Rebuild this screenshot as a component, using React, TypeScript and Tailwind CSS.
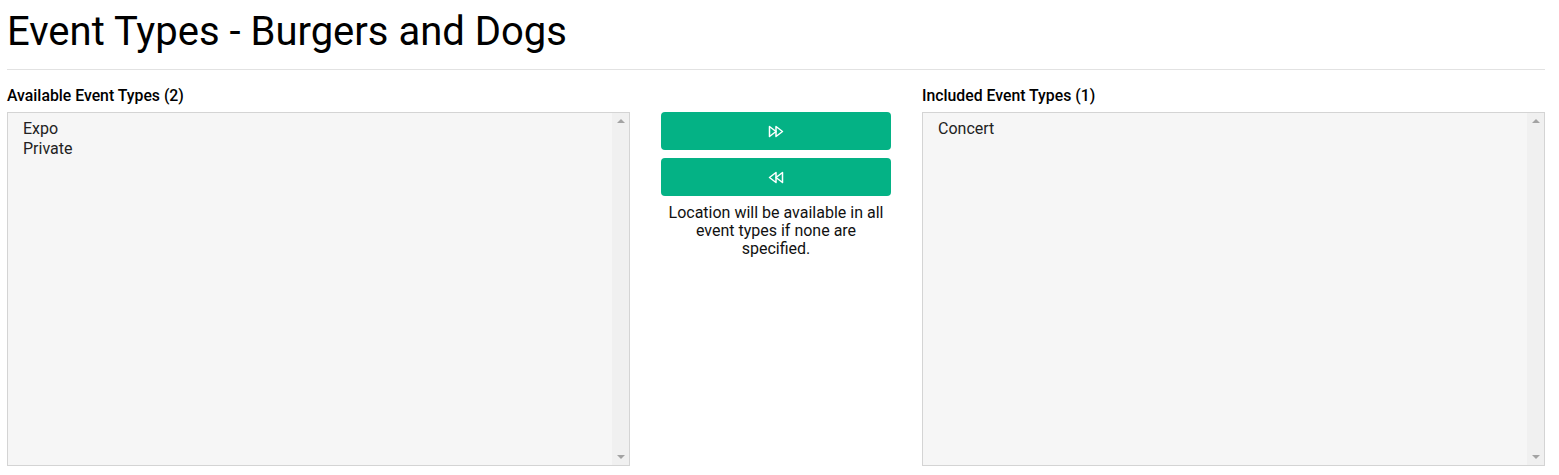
import React from 'react';

const font = { fontFamily: 'Roboto, "Liberation Sans", sans-serif' };

function ForwardIcon() {
  return (
    <svg width="16" height="13" viewBox="0 0 16 13" fill="none" stroke="white" strokeWidth="1.5" strokeLinejoin="round">
      <polygon points="1.5,1.5 8,6.5 1.5,11.5" />
      <polygon points="8,1.5 14.5,6.5 8,11.5" />
    </svg>
  );
}

function BackIcon() {
  return (
    <svg width="16" height="13" viewBox="0 0 16 13" fill="none" stroke="white" strokeWidth="1.5" strokeLinejoin="round">
      <polygon points="8,1.5 1.5,6.5 8,11.5" />
      <polygon points="14.5,1.5 8,6.5 14.5,11.5" />
    </svg>
  );
}

function ListBox({ items }: { items: string[] }) {
  return (
    <div className="flex h-[354px] border border-[#d4d4d4] bg-[#f6f6f6]">
      <ul className="flex-1 px-[15px] py-[6px] text-[16px] leading-5 text-[#222]">
        {items.map((item) => (
          <li key={item}>{item}</li>
        ))}
      </ul>
      <div className="flex w-[17px] flex-col items-center justify-between bg-[#f0f0f0] py-[6px]">
        <span className="h-0 w-0 border-x-[4px] border-b-[4px] border-x-transparent border-b-[#a3a3a3]" />
        <span className="h-0 w-0 border-x-[4px] border-t-[4px] border-x-transparent border-t-[#a3a3a3]" />
      </div>
    </div>
  );
}

export default function App() {
  return (
    <div className="min-h-screen bg-white pl-[7px] pr-[14px] pt-[4px]" style={font}>
      <h1 className="text-[40px] font-normal leading-[56px] text-black">Event Types - Burgers and Dogs</h1>
      <hr className="mt-[9px] border-t border-[#e2e2e2]" />

      <div className="mt-[16px] grid grid-cols-[623px_1fr_623px] gap-[31px]">
        <div>
          <div className="mb-[6px] text-[15.8px] font-medium leading-5 text-black">Available Event Types (2)</div>
          <ListBox items={['Expo', 'Private']} />
        </div>

        <div className="flex flex-col items-center pt-[26px]">
          <button className="flex h-[38px] w-full items-center justify-center rounded-[4px] bg-[#04b285]">
            <ForwardIcon />
          </button>
          <button className="mt-[8px] flex h-[38px] w-full items-center justify-center rounded-[4px] bg-[#04b285]">
            <BackIcon />
          </button>
          <p className="mt-[8px] px-1 text-center text-[16px] leading-[18px] text-[#111]">
            Location will be available in all event types if none are specified.
          </p>
        </div>

        <div>
          <div className="mb-[6px] text-[15.8px] font-medium leading-5 text-black">Included Event Types (1)</div>
          <ListBox items={['Concert']} />
        </div>
      </div>
    </div>
  );
}
